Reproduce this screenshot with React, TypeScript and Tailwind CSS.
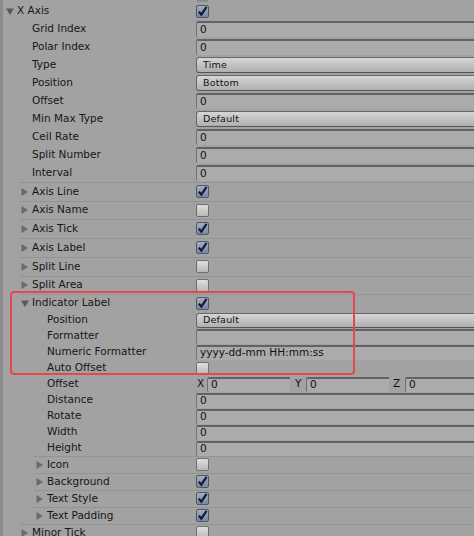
import type { ReactNode } from 'react'

type Ctl =
  | { kind: 'check'; on: boolean }
  | { kind: 'field'; value: string }
  | { kind: 'select'; value: string }
  | { kind: 'xyz' }

type RowDef = {
  label: string
  h: 16 | 17 | 18 | 19
  pad: 6 | 21 | 32 | 36 | 47
  arrow?: 'down' | 'right'
  line?: boolean
  ctl: Ctl
}

const heightClass = { 16: 'h-[16px]', 17: 'h-[17px]', 18: 'h-[18px]', 19: 'h-[19px]' }
const padClass = { 6: 'pl-[6px]', 21: 'pl-[21px]', 32: 'pl-[32px]', 36: 'pl-[36px]', 47: 'pl-[47px]' }
const lineClass = { 6: 'left-[4px]', 21: 'left-[19px]', 32: 'left-[19px]', 36: 'left-[34px]', 47: 'left-[34px]' }

const zero: Ctl = { kind: 'field', value: '0' }
const on: Ctl = { kind: 'check', on: true }
const off: Ctl = { kind: 'check', on: false }

const rows: RowDef[] = [
  { label: 'X Axis', h: 18, pad: 6, arrow: 'down', ctl: on },
  { label: 'Grid Index', h: 18, pad: 32, ctl: zero },
  { label: 'Polar Index', h: 18, pad: 32, ctl: zero },
  { label: 'Type', h: 18, pad: 32, ctl: { kind: 'select', value: 'Time' } },
  { label: 'Position', h: 18, pad: 32, ctl: { kind: 'select', value: 'Bottom' } },
  { label: 'Offset', h: 18, pad: 32, ctl: zero },
  { label: 'Min Max Type', h: 18, pad: 32, ctl: { kind: 'select', value: 'Default' } },
  { label: 'Ceil Rate', h: 18, pad: 32, ctl: zero },
  { label: 'Split Number', h: 18, pad: 32, ctl: zero },
  { label: 'Interval', h: 18, pad: 32, ctl: zero },
  { label: 'Axis Line', h: 19, pad: 21, arrow: 'right', line: true, ctl: on },
  { label: 'Axis Name', h: 18, pad: 21, arrow: 'right', line: true, ctl: off },
  { label: 'Axis Tick', h: 19, pad: 21, arrow: 'right', line: true, ctl: on },
  { label: 'Axis Label', h: 19, pad: 21, arrow: 'right', line: true, ctl: on },
  { label: 'Split Line', h: 19, pad: 21, arrow: 'right', line: true, ctl: off },
  { label: 'Split Area', h: 18, pad: 21, arrow: 'right', line: true, ctl: off },
  { label: 'Indicator Label', h: 18, pad: 21, arrow: 'down', line: true, ctl: on },
  { label: 'Position', h: 16, pad: 47, ctl: { kind: 'select', value: 'Default' } },
  { label: 'Formatter', h: 16, pad: 47, ctl: { kind: 'field', value: '' } },
  { label: 'Numeric Formatter', h: 16, pad: 47, ctl: { kind: 'field', value: 'yyyy-dd-mm HH:mm:ss' } },
  { label: 'Auto Offset', h: 16, pad: 47, ctl: off },
  { label: 'Offset', h: 16, pad: 47, ctl: { kind: 'xyz' } },
  { label: 'Distance', h: 16, pad: 47, ctl: zero },
  { label: 'Rotate', h: 16, pad: 47, ctl: zero },
  { label: 'Width', h: 16, pad: 47, ctl: zero },
  { label: 'Height', h: 16, pad: 47, ctl: zero },
  { label: 'Icon', h: 17, pad: 36, arrow: 'right', line: true, ctl: off },
  { label: 'Background', h: 17, pad: 36, arrow: 'right', line: true, ctl: on },
  { label: 'Text Style', h: 17, pad: 36, arrow: 'right', line: true, ctl: on },
  { label: 'Text Padding', h: 17, pad: 36, arrow: 'right', line: true, ctl: on },
  { label: 'Minor Tick', h: 17, pad: 21, arrow: 'right', line: true, ctl: off },
]

function Arrow({ dir }: { dir: 'down' | 'right' }) {
  return (
    <span className="flex w-[11px] shrink-0 items-center">
      {dir === 'down' ? (
        <svg width="8" height="7" viewBox="0 0 8 7">
          <path d="M0 0.5 H8 L4 7 Z" fill="#5a5a5a" />
        </svg>
      ) : (
        <svg width="7" height="8" viewBox="0 0 7 8">
          <path d="M0.5 0 V8 L7 4 Z" fill="#6a6a6a" />
        </svg>
      )}
    </span>
  )
}

function Check({ on }: { on: boolean }) {
  return on ? (
    <span className="flex h-[13px] w-[13px] items-center justify-center rounded-[2px] border border-[#4e566a] bg-gradient-to-b from-[#a4aec2] to-[#7a87a3]">
      <svg width="11" height="11" viewBox="0 0 11 11">
        <path d="M1.8 5.6 L4.3 8.6 L9.6 0.8" fill="none" stroke="#141c33" strokeWidth="2.2" />
      </svg>
    </span>
  ) : (
    <span className="h-[13px] w-[13px] rounded-[2px] border border-[#6e6e6e] bg-gradient-to-b from-[#dedede] to-[#b9b9b9]" />
  )
}

function Field({ value, tall }: { value: string; tall: boolean }) {
  return (
    <div
      className={`flex min-w-0 flex-1 items-center rounded-l-[2px] border-t-2 border-l border-t-[#626262] border-l-[#707070] bg-[#ababab] pl-[3px] text-[10.5px] text-[#111] ${tall ? 'h-[16px]' : 'h-[15px]'}`}
    >
      {value}
    </div>
  )
}

function Select({ value, tall }: { value: string; tall: boolean }) {
  return (
    <div
      className={`-mr-2 flex flex-1 items-center rounded-[3px] border border-[#666] border-b-[#555] bg-gradient-to-b from-[#d6d6d6] to-[#afafaf] pl-[6px] text-[9.5px] tracking-[0.2px] text-[#111] ${tall ? 'h-[16px]' : 'h-[15px]'}`}
    >
      {value}
    </div>
  )
}

function Control({ ctl, tall }: { ctl: Ctl; tall: boolean }) {
  if (ctl.kind === 'check') return <Check on={ctl.on} />
  if (ctl.kind === 'select') return <Select value={ctl.value} tall={tall} />
  if (ctl.kind === 'field')
    return (
      <div className="-mr-2 flex flex-1">
        <Field value={ctl.value} tall={tall} />
      </div>
    )
  return (
    <div className="-mr-2 flex flex-1 items-center text-[10.5px] text-[#111]">
      <span className="w-[11px] shrink-0 pl-[1px]">X</span>
      <div className="flex w-[83px]">
        <Field value="0" tall={false} />
      </div>
      <span className="w-[16px] shrink-0 pl-[5px]">Y</span>
      <div className="flex w-[83px]">
        <Field value="0" tall={false} />
      </div>
      <span className="w-[16px] shrink-0 pl-[4px]">Z</span>
      <div className="flex flex-1">
        <Field value="0" tall={false} />
      </div>
    </div>
  )
}

function Row({ row }: { row: RowDef }): ReactNode {
  return (
    <div className={`relative flex items-center ${heightClass[row.h]}`}>
      {row.line && <div className={`absolute top-0 right-0 h-px bg-[#949494] ${lineClass[row.pad]}`} />}
      <div className={`flex w-[196px] shrink-0 items-center ${padClass[row.pad]}`}>
        {row.arrow && <Arrow dir={row.arrow} />}
        <span className="whitespace-nowrap">{row.label}</span>
      </div>
      <div className="flex min-w-0 flex-1 items-center">
        <Control ctl={row.ctl} tall={row.h !== 16} />
      </div>
    </div>
  )
}

export default function App() {
  return (
    <div
      className="relative h-[536px] w-[474px] overflow-hidden border-l-[3px] border-[#8b8b8b] bg-[#a2a2a2] text-[10.5px] text-[#161616]"
      style={{ fontFamily: '"DejaVu Sans", Verdana, sans-serif' }}
    >
      <div className="-ml-[3px] flex h-[2px]">
        <div className="ml-[197px] h-[2px] w-[11px] bg-[#8c8c8c]" />
      </div>
      <div className="-ml-[3px]">
        {rows.map((row, i) => (
          <Row key={i} row={row} />
        ))}
      </div>
      <div className="pointer-events-none absolute top-[291px] left-[7px] h-[84px] w-[345px] rounded-[4px] border-[2.5px] border-[#e3484d]" />
    </div>
  )
}
